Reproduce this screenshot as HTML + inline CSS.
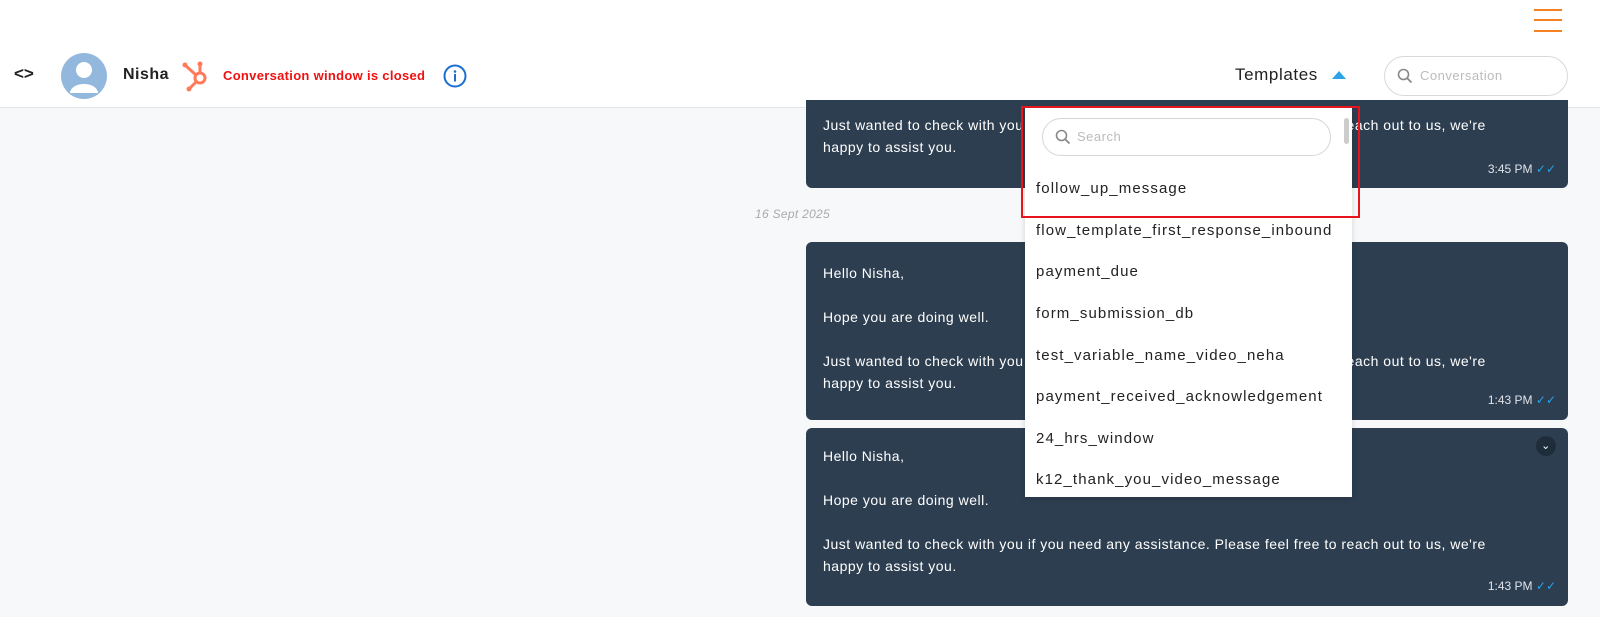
<!DOCTYPE html>
<html><head><style>
*{margin:0;padding:0;box-sizing:border-box}
body{width:1600px;height:617px;overflow:hidden;background:#f7f8fa;font-family:"Liberation Sans",sans-serif;position:relative}
.hdr{position:absolute;left:0;top:0;width:1600px;height:108px;background:#fff;border-bottom:1px solid #e3e5e8}
.abs{position:absolute}
.bub{position:absolute;left:806px;width:762px;background:#2d3e50;border-radius:6px;color:#fff;font-size:14px;line-height:22px;padding-left:17px;letter-spacing:0.5px}
.time{position:absolute;right:12px;font-size:12px;color:#dfe4ea;letter-spacing:0}
.item{position:absolute;left:11px;font-size:15px;color:#222;letter-spacing:1.1px}
</style></head><body>
<div class="hdr">
 <div class="abs" style="left:1534px;top:9px;width:28px;height:2px;background:#f58220"></div>
 <div class="abs" style="left:1534px;top:19px;width:28px;height:2px;background:#f58220"></div>
 <div class="abs" style="left:1534px;top:30px;width:28px;height:2px;background:#f58220"></div>
 <div class="abs" style="left:14px;top:64px;font-size:17px;font-weight:bold;color:#222">&lt;&gt;</div>
 <svg class="abs" style="left:61px;top:53px" width="46" height="46" viewBox="0 0 46 46"><circle cx="23" cy="23" r="23" fill="#93b8de"/><circle cx="23" cy="17" r="8" fill="#fff"/><path d="M9 40 C10 28 36 28 37 40 Z" fill="#fff"/></svg>
 <div class="abs" style="left:123px;top:66px;font-size:16px;font-weight:bold;color:#222;letter-spacing:0.5px">Nisha</div>
 <svg class="abs" style="left:182px;top:59px" width="30" height="34" viewBox="0 0 30 34"><g stroke="#ff7a59" stroke-width="3" fill="none"><circle cx="18" cy="19" r="5"/><line x1="18" y1="14" x2="18" y2="6"/><line x1="14" y1="16" x2="4" y2="7"/><line x1="14" y1="23" x2="8" y2="29"/></g><circle cx="18" cy="5" r="2.5" fill="#ff7a59"/><circle cx="3" cy="6" r="2.5" fill="#ff7a59"/><circle cx="7" cy="30" r="2.5" fill="#ff7a59"/></svg>
 <div class="abs" style="left:223px;top:68px;font-size:13px;font-weight:bold;color:#ee1111;letter-spacing:0.3px">Conversation window is closed</div>
 <svg class="abs" style="left:443px;top:64px" width="24" height="24" viewBox="0 0 24 24"><circle cx="12" cy="12" r="10.5" fill="none" stroke="#1a6fd1" stroke-width="2"/><circle cx="12" cy="7.5" r="1.3" fill="#1a6fd1"/><rect x="11" y="10" width="2" height="7.5" fill="#1a6fd1"/></svg>
 <div class="abs" style="left:1235px;top:65px;font-size:17px;color:#222;letter-spacing:0.6px">Templates</div>
 <div class="abs" style="left:1332px;top:71px;width:0;height:0;border-left:7px solid transparent;border-right:7px solid transparent;border-bottom:8px solid #2aa3e8"></div>
 <div class="abs" style="left:1384px;top:56px;width:184px;height:40px;border:1.5px solid #d9d9d9;border-radius:20px"></div>
 <svg class="abs" style="left:1397px;top:68px" width="16" height="16" viewBox="0 0 16 16"><circle cx="6.5" cy="6.5" r="5" fill="none" stroke="#888" stroke-width="1.6"/><line x1="10" y1="10" x2="14.5" y2="14.5" stroke="#888" stroke-width="1.8"/></svg>
 <div class="abs" style="left:1420px;top:68px;font-size:13px;color:#bbb;letter-spacing:0.5px">Conversation</div>
</div>

<div class="bub" style="top:100px;height:88px;border-radius:0 0 6px 6px"><div style="padding-top:14px">Just wanted to check with you if you need any assistance. Please feel free to reach out to us, we're<br>happy to assist you.</div><div class="time" style="top:58px">3:45 PM <span style="color:#2aa3e8">✓✓</span></div></div>
<div class="abs" style="left:755px;top:207px;font-size:12px;font-style:italic;color:#aaa;letter-spacing:0.3px">16 Sept 2025</div>
<div class="bub" style="top:242px;height:178px"><div style="padding-top:20px">Hello Nisha,<br><br>Hope you are doing well.<br><br>Just wanted to check with you if you need any assistance. Please feel free to reach out to us, we're<br>happy to assist you.</div><div class="time" style="top:147px">1:43 PM <span style="color:#2aa3e8">✓✓</span></div></div>
<div class="bub" style="top:428px;height:178px"><div style="padding-top:17px">Hello Nisha,<br><br>Hope you are doing well.<br><br>Just wanted to check with you if you need any assistance. Please feel free to reach out to us, we're<br>happy to assist you.</div><div class="time" style="top:147px">1:43 PM <span style="color:#2aa3e8">✓✓</span></div>
 <div class="abs" style="right:12px;top:8px;width:20px;height:20px;border-radius:50%;background:#1f2d3b;font-size:11px;text-align:center;line-height:20px">⌄</div></div>

<div class="abs" style="left:1025px;top:108px;width:327px;height:389px;background:#fff;box-shadow:0 2px 6px rgba(0,0,0,.15)">
 <div class="abs" style="right:3px;top:10px;width:5px;height:26px;background:#ccc;border-radius:3px"></div>
 <div class="abs" style="left:17px;top:10px;width:289px;height:38px;border:1.5px solid #d6d6d6;border-radius:19px"></div>
 <svg class="abs" style="left:30px;top:21px" width="16" height="16" viewBox="0 0 16 16"><circle cx="6.5" cy="6.5" r="5" fill="none" stroke="#888" stroke-width="1.6"/><line x1="10" y1="10" x2="14.5" y2="14.5" stroke="#888" stroke-width="1.8"/></svg>
 <div class="abs" style="left:52px;top:21px;font-size:13px;color:#bbb;letter-spacing:0.5px">Search</div>
 <div class="item" style="top:72px">follow_up_message</div>
 <div class="item" style="top:114px">flow_template_first_response_inbound</div>
 <div class="item" style="top:155px">payment_due</div>
 <div class="item" style="top:197px">form_submission_db</div>
 <div class="item" style="top:239px">test_variable_name_video_neha</div>
 <div class="item" style="top:280px">payment_received_acknowledgement</div>
 <div class="item" style="top:322px">24_hrs_window</div>
 <div class="item" style="top:363px">k12_thank_you_video_message</div>
</div>
<div class="abs" style="left:1021px;top:106px;width:339px;height:112px;border:2px solid #e8141c"></div>
</body></html>
